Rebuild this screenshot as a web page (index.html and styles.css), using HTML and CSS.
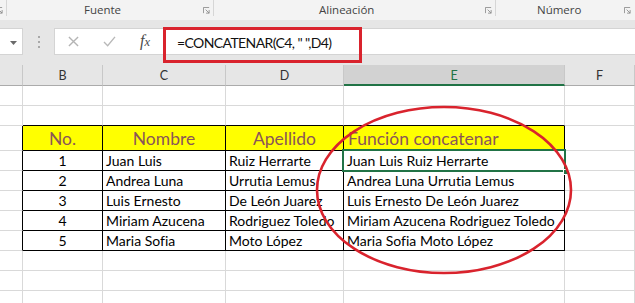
FILE: index.html
```html
<!DOCTYPE html>
<html lang="es">
<head>
<meta charset="utf-8">
<title>Concatenar</title>
<link rel="stylesheet" href="styles.css">
</head>
<body>
<div class="page">
  <div class="ribbon">
    <div class="grp g0">
      <svg class="launch" viewBox="0 0 8 8"><path d="M0.5 7V0.5H7" /><path d="M3 3l4 4M7 3.5V7H3.5" /></svg>
    </div>
    <div class="grp g1">
      <span class="glabel">Fuente</span>
      <svg class="launch" viewBox="0 0 8 8"><path d="M0.5 7V0.5H7" /><path d="M3 3l4 4M7 3.5V7H3.5" /></svg>
    </div>
    <div class="grp g2">
      <span class="glabel">Alineación</span>
      <svg class="launch" viewBox="0 0 8 8"><path d="M0.5 7V0.5H7" /><path d="M3 3l4 4M7 3.5V7H3.5" /></svg>
    </div>
    <div class="grp g3">
      <span class="glabel">Número</span>
      <svg class="launch" viewBox="0 0 8 8"><path d="M0.5 7V0.5H7" /><path d="M3 3l4 4M7 3.5V7H3.5" /></svg>
    </div>
  </div>

  <div class="fbar">
    <div class="namebox">
      <svg class="tri" viewBox="0 0 7 4"><path d="M0 0h7L3.5 4z" /></svg>
    </div>
    <div class="grip"><i></i><i></i><i></i></div>
    <div class="fbox">
      <svg class="ico cancel" viewBox="0 0 12 12"><path d="M1 1l10 10M11 1L1 11" /></svg>
      <svg class="ico enter" viewBox="0 0 14 12"><path d="M1 6.5l4 4L13 1" /></svg>
      <span class="fx">f<span class="fxx">x</span></span>
      <span class="ftext">=CONCATENAR(C4, " ",D4)</span>
    </div>
    <div class="redbox"></div>
  </div>

  <div class="sheet">
    <div class="ch"></div><div class="ch">B</div><div class="ch">C</div><div class="ch">D</div><div class="ch sel">E</div><div class="ch">F</div>

    <div class="c"></div><div class="c"></div><div class="c"></div><div class="c"></div><div class="c"></div><div class="c"></div>
    <div class="c"></div><div class="c bt"></div><div class="c bt"></div><div class="c bt"></div><div class="c bt"></div><div class="c"></div>

    <div class="c bl"></div><div class="c t th ctr">No.</div><div class="c t th ctr">Nombre</div><div class="c t th ctr">Apellido</div><div class="c t th">Función concatenar</div><div class="c"></div>

    <div class="c bl"></div><div class="c t ctr">1</div><div class="c t">Juan Luis</div><div class="c t">Ruiz Herrarte</div><div class="c t">Juan Luis Ruiz Herrarte</div><div class="c"></div>
    <div class="c bl"></div><div class="c t ctr">2</div><div class="c t">Andrea Luna</div><div class="c t">Urrutia Lemus</div><div class="c t">Andrea Luna Urrutia Lemus</div><div class="c"></div>
    <div class="c bl"></div><div class="c t ctr">3</div><div class="c t">Luis Ernesto</div><div class="c t">De León Juarez</div><div class="c t">Luis Ernesto De León Juarez</div><div class="c"></div>
    <div class="c bl"></div><div class="c t ctr">4</div><div class="c t">Miriam Azucena</div><div class="c t">Rodriguez Toledo</div><div class="c t">Miriam Azucena Rodriguez Toledo</div><div class="c"></div>
    <div class="c bl"></div><div class="c t ctr">5</div><div class="c t">Maria Sofia</div><div class="c t">Moto López</div><div class="c t">Maria Sofia Moto López</div><div class="c"></div>

    <div class="c"></div><div class="c"></div><div class="c"></div><div class="c"></div><div class="c"></div><div class="c"></div>
    <div class="c"></div><div class="c"></div><div class="c"></div><div class="c"></div><div class="c"></div><div class="c"></div>
    <div class="c"></div><div class="c"></div><div class="c"></div><div class="c"></div><div class="c"></div><div class="c"></div>
  </div>

  <div class="active"><span class="handle"></span></div>

  <svg class="circle" viewBox="0 0 635 303">
    <ellipse cx="444" cy="190" rx="127" ry="83" />
  </svg>
</div>
</body>
</html>
```

FILE: styles.css
```css
* { box-sizing: border-box; }
html, body { margin: 0; padding: 0; }
body {
  width: 635px;
  height: 303px;
  overflow: hidden;
  background: #ffffff;
  font-family: Lato, "Open Sans", sans-serif;
  font-variant-ligatures: none;
  font-feature-settings: "liga" 0, "clig" 0;
}
.page {
  position: relative;
  width: 635px;
  height: 303px;
  overflow: hidden;
}

/* ribbon */
.ribbon {
  height: 20px;
  background: #f3f3f3;
  display: flex;
  align-items: flex-start;
}
.grp {
  height: 16px;
  border-right: 1px solid #d6d6d6;
  display: flex;
  align-items: center;
  position: relative;
}
.g0 { width: 7px; }
.g1 { width: 207px; }
.g2 { width: 282px; }
.g3 { flex: 1; border-right: none; }
.glabel {
  font-family: "Open Sans", sans-serif;
  font-size: 11.5px;
  color: #444;
  line-height: 16px;
  padding-top: 4px;
}
.g1 .glabel { margin-left: 77px; }
.g2 .glabel { margin-left: 105px; }
.g3 .glabel { margin-left: 41px; }
.launch {
  position: absolute;
  top: 7px;
  width: 7px;
  height: 7px;
  fill: none;
  stroke: #8a8a8a;
  stroke-width: 1;
}
.g0 .launch { left: -4px; }
.g1 .launch { right: 3px; }
.g2 .launch { right: 3px; }
.g3 .launch { right: 4px; }

/* formula bar */
.fbar {
  height: 45px;
  background: #e6e6e6;
  display: flex;
  align-items: flex-start;
  padding-top: 8px;
  position: relative;
}
.namebox {
  width: 23px;
  height: 27px;
  background: #fff;
  border: 1px solid #d4d4d4;
  border-left: none;
  position: relative;
}
.tri {
  position: absolute;
  left: 10px;
  top: 12px;
  width: 7px;
  height: 4px;
  fill: #6a6a6a;
}
.grip {
  width: 31px;
  height: 27px;
  display: flex;
  flex-direction: column;
  align-items: center;
  justify-content: center;
  gap: 3px;
}
.grip i {
  display: block;
  width: 2px;
  height: 2px;
  background: #a8a8a8;
}
.fbox {
  flex: 1;
  height: 27px;
  background: #fff;
  border: 1px solid #d4d4d4;
  border-right: none;
  display: flex;
  align-items: center;
}
.ico {
  fill: none;
  stroke: #b4b4b4;
  stroke-width: 1.5;
}
.cancel { width: 11px; height: 11px; margin-left: 13px; }
.enter { width: 13px; height: 11px; margin-left: 24px; stroke: #b8b8b8; }
.fx {
  font-family: "Liberation Serif", serif;
  font-style: italic;
  font-size: 16px;
  color: #4a4a4a;
  margin-left: 24px;
  line-height: 1;
  padding-bottom: 2px;
}
.fxx { font-size: 12.5px; }
.ftext {
  margin-left: 27px;
  font-family: Lato, sans-serif;
  font-size: 14px;
  color: #111;
  letter-spacing: -0.6px;
  padding-top: 1px;
}
.redbox {
  position: absolute;
  left: 163px;
  top: 7px;
  width: 199px;
  height: 36px;
  border: 3px solid #d9232d;
}

/* sheet grid */
.sheet {
  display: grid;
  grid-template-columns: 23px 80px 123px 118px 221px 1fr;
  grid-template-rows: 21px 20px 20px 25px 20px 20px 20px 20px 20px 20px 20px 20px;
}
.ch {
  background: #e6e6e6;
  border-right: 1px solid #c8c8c8;
  border-bottom: 1px solid #ababab;
  font-size: 12.5px;
  color: #333;
  display: flex;
  align-items: center;
  justify-content: center;
  padding-top: 1px;
}
.ch.sel {
  background: #d2d2d2;
  border-bottom: 2px solid #217346;
  color: #217346;
}
.c {
  border-right: 1px solid #d9d9d9;
  border-bottom: 1px solid #d9d9d9;
  display: flex;
  align-items: flex-end;
  font-size: 14px;
  line-height: 17px;
  color: #000;
  padding: 0 0 1px 3px;
  white-space: nowrap;
  overflow: visible;
}
.c.bt { border-bottom-color: #000; }
.c.bl { border-right-color: #000; }
.c.t {
  border-right-color: #000;
  border-bottom-color: #000;
}
.c.th {
  background: #ffff00;
  color: #8a5658;
  font-size: 17.5px;
  line-height: 20px;
  padding-bottom: 1px;
  padding-left: 4px;
}
.c.ctr { justify-content: center; padding-left: 0; }

/* active cell */
.active {
  position: absolute;
  left: 342px;
  top: 149px;
  width: 224px;
  height: 23px;
  border: 2px solid #217346;
}
.handle {
  position: absolute;
  right: -5px;
  bottom: -5px;
  width: 6px;
  height: 6px;
  background: #217346;
  border: 1px solid #fff;
}

/* annotation */
.circle {
  position: absolute;
  left: 0;
  top: 0;
  width: 635px;
  height: 303px;
  pointer-events: none;
}
.circle ellipse {
  fill: none;
  stroke: #d9232d;
  stroke-width: 2.6;
}
```
